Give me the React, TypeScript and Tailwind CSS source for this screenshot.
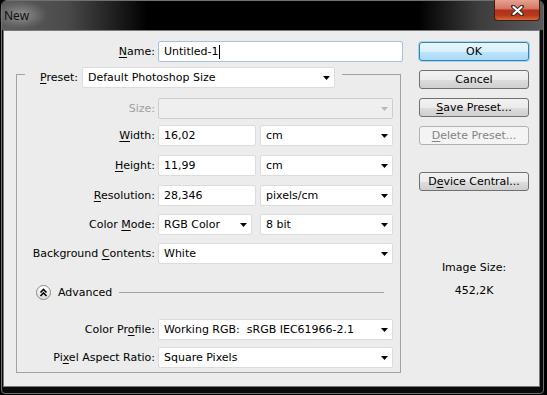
import React from "react";

const Arrow = ({ disabled }: { disabled?: boolean }) => (
  <svg width="7" height="4" viewBox="0 0 7 4" className="shrink-0">
    <path d="M0 0H7L3.5 4Z" fill={disabled ? "#b8b8b8" : "#000"} />
  </svg>
);

const U = ({ a, u, b }: { a?: string; u: string; b?: string }) => (
  <span className="whitespace-pre">
    {a}
    <span className="underline underline-offset-[2px] decoration-1">{u}</span>
    {b}
  </span>
);

function Combo({ w, text, disabled }: { w: string; text: string; disabled?: boolean }) {
  return (
    <div
      className={`h-[21px] ${w} flex items-center justify-between rounded-[2px] border ${
        disabled ? "border-[#cdcdcd] bg-[#efefef]" : "border-[#dcdcdc] bg-white"
      } pl-[5px] pr-[4px]`}
    >
      <span className="whitespace-pre">{text}</span>
      <Arrow disabled={disabled} />
    </div>
  );
}

function Field({ w, text, focus }: { w: string; text: string; focus?: boolean }) {
  return (
    <div
      className={`h-[21px] ${w} flex items-center rounded-[2px] border ${
        focus ? "border-[#a3c3e3]" : "border-[#dcdcdc]"
      } bg-white pl-[5px]`}
    >
      <span className="whitespace-pre">{text}</span>
      {focus && <span className="ml-[1px] w-px h-[14px] bg-black" />}
    </div>
  );
}

function Btn({
  children,
  def,
  disabled,
  className = "",
}: {
  children: React.ReactNode;
  def?: boolean;
  disabled?: boolean;
  className?: string;
}) {
  const look = def
    ? "border-[#3c7fb1] bg-[linear-gradient(to_bottom,#eaf6fd_0%,#d9f0fc_50%,#bee6fd_51%,#a7d9f5_100%)] shadow-[0_0_0_1px_#9fd4f3]"
    : disabled
    ? "border-[#adb2b5] bg-[#f4f4f4] text-[#838383]"
    : "border-[#707070] bg-[linear-gradient(to_bottom,#f2f2f2_0%,#ebebeb_50%,#dddddd_51%,#cfcfcf_100%)]";
  return (
    <div
      className={`w-[110px] h-[19px] rounded-[3px] border flex items-center justify-center ${look} ${className}`}
    >
      {children}
    </div>
  );
}

export default function App() {
  return (
    <div className="w-[547px] h-[395px] bg-black overflow-hidden font-['DejaVu_Sans',sans-serif] text-[11px] leading-[13px] text-black">
      <div className="ml-[1px] w-[543px] h-[394px] border border-[#707070] rounded-t-[6px] rounded-b-[4px] bg-[#0a0a0a] flex flex-col">
        {/* title bar */}
        <div className="h-[29px] flex items-start bg-[linear-gradient(to_right,#5e5e5e_0%,#4a4a4a_12%,#000_27%,#000_77%,#3c3c3c_88%,#5a5a5a_100%)] rounded-t-[5px]">
          <div className="ml-[-6px] mt-[1px] h-[26px] w-[50px] flex items-center pl-[8px] bg-[radial-gradient(ellipse_at_center,rgba(190,190,190,0.55)_0%,rgba(140,140,140,0.25)_55%,transparent_75%)]">
            <span className="font-['Noto_Sans',sans-serif] text-[12px] text-[#101010]">New</span>
          </div>
          <div className="ml-auto mr-[3px] -mt-px w-[46px] h-[21px] rounded-b-[4px] border border-[#4a1a10] border-t-0 bg-[linear-gradient(to_bottom,#e6a190_0%,#d27a66_42%,#b2301a_52%,#b83a1c_78%,#d56a3c_100%)] flex items-center justify-center">
            <svg width="13" height="11" viewBox="0 0 13 11">
              <path d="M2 1.5L11 9.5M11 1.5L2 9.5" stroke="#3a2a28" strokeWidth="4" strokeLinecap="round" />
              <path d="M2.5 2L10.5 9M10.5 2L2.5 9" stroke="#fff" strokeWidth="2.2" strokeLinecap="round" />
            </svg>
          </div>
        </div>

        {/* client */}
        <div className="ml-[1px] w-[537px] h-[357px] border border-[#7a7a7a] bg-[#ececec] flex">
          {/* left section */}
          <div className="w-[399px] flex flex-col">
            <div className="mt-[10px] flex items-center">
              <div className="w-[151px] text-right">
                <U u="N" b="ame:" />
              </div>
              <div className="ml-[3px]">
                <Field w="w-[245px]" text="Untitled-1" focus />
              </div>
            </div>

            {/* group box */}
            <div className="ml-[12px] mt-[12px] w-[385px] border-l border-r border-b border-[#a2a2a2] flex flex-col pb-[4px]">
              <div className="-mt-[7px] flex items-start">
                <div className="mt-[7px] w-[8px] h-px bg-[#a2a2a2]" />
                <div className="w-[53px] h-[21px] flex items-center justify-end">
                  <U u="P" b="reset:" />
                </div>
                <div className="ml-[4px]">
                  <Combo w="w-[253px]" text="Default Photoshop Size" />
                </div>
                <div className="ml-[7px] mt-[7px] flex-1 h-px bg-[#a2a2a2]" />
              </div>

              <div className="mt-[10px] flex items-center">
                <div className="w-[138px] text-right text-[#a0a0a0]">Size:</div>
                <div className="ml-[3px]">
                  <Combo w="w-[235px]" text="" disabled />
                </div>
              </div>

              <div className="mt-[6px] flex items-center">
                <div className="w-[138px] text-right">
                  <U u="W" b="idth:" />
                </div>
                <div className="ml-[3px] flex gap-[4px]">
                  <Field w="w-[98px]" text="16,02" />
                  <Combo w="w-[133px]" text="cm" />
                </div>
              </div>

              <div className="mt-[9px] flex items-center">
                <div className="w-[138px] text-right">
                  <U u="H" b="eight:" />
                </div>
                <div className="ml-[3px] flex gap-[4px]">
                  <Field w="w-[98px]" text="11,99" />
                  <Combo w="w-[133px]" text="cm" />
                </div>
              </div>

              <div className="mt-[9px] flex items-center">
                <div className="w-[138px] text-right">
                  <U u="R" b="esolution:" />
                </div>
                <div className="ml-[3px] flex gap-[4px]">
                  <Field w="w-[98px]" text="28,346" />
                  <Combo w="w-[133px]" text="pixels/cm" />
                </div>
              </div>

              <div className="mt-[8px] flex items-center">
                <div className="w-[138px] text-right">
                  <U a="Color " u="M" b="ode:" />
                </div>
                <div className="ml-[3px] flex gap-[8px]">
                  <Combo w="w-[94px]" text="RGB Color" />
                  <Combo w="w-[133px]" text="8 bit" />
                </div>
              </div>

              <div className="mt-[8px] flex items-center">
                <div className="w-[138px] text-right">
                  <U a="Background " u="C" b="ontents:" />
                </div>
                <div className="ml-[3px]">
                  <Combo w="w-[235px]" text="White" />
                </div>
              </div>

              <div className="mt-[21px] h-[14px] flex items-center">
                <div className="ml-[19px] w-[15px] h-[15px] rounded-full border border-[#8a8a8a] bg-[linear-gradient(to_bottom,#ffffff,#dcdcdc)] flex items-center justify-center">
                  <svg width="9" height="9" viewBox="0 0 9 9">
                    <path d="M1.5 4.5L4.5 1.5L7.5 4.5M1.5 8L4.5 5L7.5 8" stroke="#000" strokeWidth="1.6" fill="none" />
                  </svg>
                </div>
                <span className="ml-[7px]">Advanced</span>
                <div className="ml-[7px] mr-[16px] flex-1 h-px bg-[#a2a2a2]" />
              </div>

              <div className="mt-[20px] flex items-center">
                <div className="w-[138px] text-right">
                  <U a="Color Pr" u="o" b="file:" />
                </div>
                <div className="ml-[3px]">
                  <Combo w="w-[235px]" text="Working RGB:  sRGB IEC61966-2.1" />
                </div>
              </div>

              <div className="mt-[7px] flex items-center">
                <div className="w-[138px] text-right">
                  <U a="Pi" u="x" b="el Aspect Ratio:" />
                </div>
                <div className="ml-[3px]">
                  <Combo w="w-[235px]" text="Square Pixels" />
                </div>
              </div>
            </div>
          </div>

          {/* right column */}
          <div className="ml-[16px] w-[110px] flex flex-col items-center">
            <Btn def className="mt-[11px]">OK</Btn>
            <Btn className="mt-[9px]">Cancel</Btn>
            <Btn className="mt-[9px]">
              <U u="S" b="ave Preset..." />
            </Btn>
            <Btn disabled className="mt-[9px]">
              <U u="D" b="elete Preset..." />
            </Btn>
            <Btn className="mt-[27px]">
              <U a="D" u="e" b="vice Central..." />
            </Btn>
            <div className="mt-[69px] h-[14px] flex items-center">Image Size:</div>
            <div className="mt-[9px] h-[14px] flex items-center">452,2K</div>
          </div>
        </div>
      </div>
    </div>
  );
}
